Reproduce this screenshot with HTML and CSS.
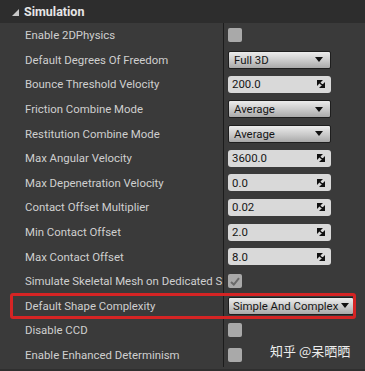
FILE: index.html
```html
<!DOCTYPE html>
<html>
<head>
<meta charset="utf-8">
<link rel="stylesheet" href="styles.css">
</head>
<body>
<div class="panel">
  <div class="header">
    <svg class="tri" width="7" height="7" viewBox="0 0 7 7"><polygon points="7,0 7,7 0,7" fill="#c8c8c8"/></svg>
    <span class="title">Simulation</span>
  </div>
  <div class="rows">
    <div class="row"><div class="name">Enable 2DPhysics</div><div class="val"><span class="check"></span></div></div>
    <div class="row"><div class="name">Default Degrees Of Freedom</div><div class="val"><div class="combo"><span>Full 3D</span><svg class="arrow" width="8" height="5" viewBox="0 0 8 5"><polygon points="0,0 8,0 4,5" fill="#111"/></svg></div></div></div>
    <div class="row"><div class="name">Bounce Threshold Velocity</div><div class="val"><div class="num"><span>200.0</span><svg class="spin" width="8" height="8" viewBox="0 0 8 8"><path d="M0 0H5L0 5Z M8 8H3L8 3Z M1.5 1.5L6.5 6.5" fill="#111" stroke="#111" stroke-width="1.4"/></svg></div></div></div>
    <div class="row"><div class="name">Friction Combine Mode</div><div class="val"><div class="combo"><span>Average</span><svg class="arrow" width="8" height="5" viewBox="0 0 8 5"><polygon points="0,0 8,0 4,5" fill="#111"/></svg></div></div></div>
    <div class="row"><div class="name">Restitution Combine Mode</div><div class="val"><div class="combo"><span>Average</span><svg class="arrow" width="8" height="5" viewBox="0 0 8 5"><polygon points="0,0 8,0 4,5" fill="#111"/></svg></div></div></div>
    <div class="row"><div class="name">Max Angular Velocity</div><div class="val"><div class="num"><span>3600.0</span><svg class="spin" width="8" height="8" viewBox="0 0 8 8"><path d="M0 0H5L0 5Z M8 8H3L8 3Z M1.5 1.5L6.5 6.5" fill="#111" stroke="#111" stroke-width="1.4"/></svg></div></div></div>
    <div class="row"><div class="name">Max Depenetration Velocity</div><div class="val"><div class="num"><span>0.0</span><svg class="spin" width="8" height="8" viewBox="0 0 8 8"><path d="M0 0H5L0 5Z M8 8H3L8 3Z M1.5 1.5L6.5 6.5" fill="#111" stroke="#111" stroke-width="1.4"/></svg></div></div></div>
    <div class="row"><div class="name">Contact Offset Multiplier</div><div class="val"><div class="num"><span>0.02</span><svg class="spin" width="8" height="8" viewBox="0 0 8 8"><path d="M0 0H5L0 5Z M8 8H3L8 3Z M1.5 1.5L6.5 6.5" fill="#111" stroke="#111" stroke-width="1.4"/></svg></div></div></div>
    <div class="row"><div class="name">Min Contact Offset</div><div class="val"><div class="num"><span>2.0</span><svg class="spin" width="8" height="8" viewBox="0 0 8 8"><path d="M0 0H5L0 5Z M8 8H3L8 3Z M1.5 1.5L6.5 6.5" fill="#111" stroke="#111" stroke-width="1.4"/></svg></div></div></div>
    <div class="row"><div class="name">Max Contact Offset</div><div class="val"><div class="num"><span>8.0</span><svg class="spin" width="8" height="8" viewBox="0 0 8 8"><path d="M0 0H5L0 5Z M8 8H3L8 3Z M1.5 1.5L6.5 6.5" fill="#111" stroke="#111" stroke-width="1.4"/></svg></div></div></div>
    <div class="row"><div class="name">Simulate Skeletal Mesh on Dedicated S</div><div class="val"><span class="check"><svg width="10" height="9" viewBox="0 0 10 9"><path d="M1 5L3.8 7.6L9 1.2" fill="none" stroke="#6a6a6a" stroke-width="2"/></svg></span></div></div>
    <div class="row"><div class="name">Default Shape Complexity</div><div class="val"><div class="combo wide"><span>Simple And Complex</span><svg class="arrow" width="8" height="5" viewBox="0 0 8 5"><polygon points="0,0 8,0 4,5" fill="#111"/></svg></div></div></div>
    <div class="row"><div class="name">Disable CCD</div><div class="val"><span class="check"></span></div></div>
    <div class="row"><div class="name">Enable Enhanced Determinism</div><div class="val"><span class="check"></span></div></div>
  </div>
  <div class="highlight"></div>
  <div class="watermark">知乎 @呆晒晒</div>
</div>
</body>
</html>
```

FILE: styles.css
```css
html, body {
  margin: 0;
  padding: 0;
  background: #2f2f2f;
}
.panel {
  position: relative;
  width: 365px;
  height: 371px;
  overflow: hidden;
  background: #2f2f2f;
  font-family: Roboto, "Liberation Sans", sans-serif;
}
.header {
  height: 23px;
  display: flex;
  align-items: center;
  padding-left: 12px;
  background: #2d2d2d;
  box-sizing: border-box;
}
.tri {
  margin-right: 5px;
  margin-top: 1px;
}
.title {
  color: #e6e6e6;
  font-weight: bold;
  font-size: 12.5px;
}
.rows {
  background: #3a3a3a;
  padding-bottom: 2px;
}
.row {
  display: grid;
  grid-template-columns: 223px 1px 1fr;
  height: 24.6px;
  background-image: linear-gradient(#1c1c1c, #1c1c1c);
  background-size: 1px 100%;
  background-position: 223px 0;
  background-repeat: no-repeat;
}
.name {
  grid-column: 1;
  padding-left: 25px;
  color: #cfcfcf;
  font-size: 11.4px;
  white-space: nowrap;
  overflow: hidden;
  display: flex;
  align-items: center;
}
.val {
  grid-column: 3;
  display: flex;
  align-items: center;
  padding-left: 4px;
}
.check {
  width: 14px;
  height: 14px;
  background: #a9a9a9;
  border-radius: 2px;
  display: flex;
  align-items: center;
  justify-content: center;
}
.combo {
  width: 103px;
  height: 18px;
  box-sizing: border-box;
  border: 1px solid #1e1e1e;
  border-radius: 2px;
  background: linear-gradient(#ececec, #c9c9c9 55%, #a9a9a9);
  display: flex;
  align-items: center;
  justify-content: space-between;
  padding: 0 7px 0 5px;
  color: #151515;
  font-size: 11.4px;
}
.combo.wide {
  width: 126px;
  padding: 0 4px 0 4px;
}
.num {
  width: 103px;
  height: 17px;
  box-sizing: border-box;
  border-radius: 3px;
  background: #d9d9d9;
  display: flex;
  align-items: center;
  justify-content: space-between;
  padding: 0 6px 0 4px;
  color: #151515;
  font-size: 11.4px;
}
.highlight {
  position: absolute;
  left: 10px;
  top: 293px;
  width: 346px;
  height: 26px;
  box-sizing: border-box;
  border: 3px solid #d52424;
  border-radius: 3px;
}
.watermark {
  position: absolute;
  left: 270px;
  top: 342px;
  color: #ececec;
  font-family: "Noto Sans CJK SC", sans-serif;
  font-size: 13px;
  line-height: 18px;
  white-space: nowrap;
}
```
